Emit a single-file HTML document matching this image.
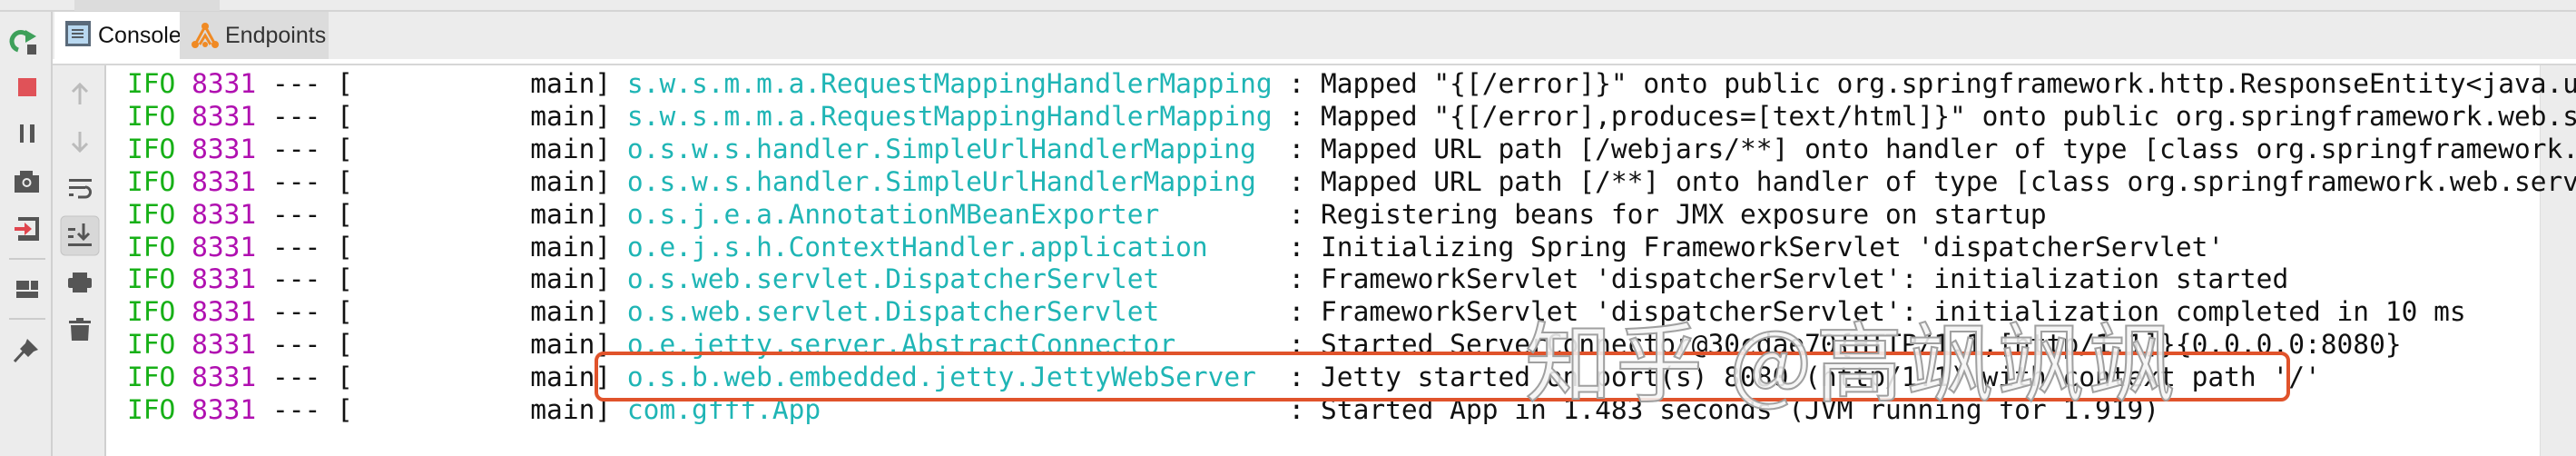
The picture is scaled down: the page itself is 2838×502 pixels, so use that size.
<!DOCTYPE html>
<html><head><meta charset="utf-8"><style>
*{margin:0;padding:0;box-sizing:border-box}
body{width:2838px;height:502px;overflow:hidden;background:#fff;position:relative;font-family:"Liberation Sans",sans-serif}
.top{position:absolute;left:0;top:0;width:2838px;height:13px;background:#ececec;border-bottom:2px solid #d4d4d4}
.apptab{position:absolute;left:82px;top:0;width:160px;height:12px;background:#dcdcdc}
.lt{position:absolute;left:0;top:13px;width:58px;height:489px;background:#ececec;border-right:2px solid #d0d0d0}
.tabs{position:absolute;left:58px;top:13px;width:2780px;height:52px;background:#ececec}
.tabline{position:absolute;left:58px;top:65px;width:2780px;height:7px;background:#fff;border-bottom:2px solid #d6d6d6}
.t1{position:absolute;left:60px;top:13px;width:138px;height:54px;background:#fff;font-size:25px;color:#111}
.t2{position:absolute;left:198px;top:13px;width:164px;height:52px;background:#dcdcdc;font-size:25px;color:#333}
.lt2{position:absolute;left:58px;top:72px;width:59px;height:430px;background:#ececec;border-right:2px solid #d0d0d0}
.sb{position:absolute;left:2798px;top:72px;width:40px;height:430px;background:#ececec;border-left:1px solid #ddd}
pre{position:absolute;left:140px;top:75px;font-family:"DejaVu Sans Mono","Liberation Mono",monospace;font-size:29.52px;line-height:35.9px;color:#111;white-space:pre}
.g{color:#17b017}.m{color:#b010b0}.c{color:#1fb5b5}
.box{position:absolute;left:655px;top:387px;width:1868px;height:55px;border:4px solid #e0532b;border-radius:10px}
.wm{position:absolute;left:1680px;top:338px;font-family:"Noto Sans CJK SC",sans-serif;font-size:96px;line-height:110px;color:rgba(245,245,245,0.88);-webkit-text-stroke:2px #a0a0a0;letter-spacing:4px;white-space:nowrap}
</style></head><body>
<div class="top"><div class="apptab"></div></div>
<div class="tabs"></div>
<div class="t1"><svg style="position:absolute;left:12px;top:10px" width="28" height="28"><rect x="0" y="0" width="28" height="28" fill="#5a6a7a"/><rect x="3" y="5" width="22" height="20" fill="#b8d8f0"/><g stroke="#333" stroke-width="1.5"><line x1="7" y1="10" x2="20" y2="10"/><line x1="7" y1="14" x2="20" y2="14"/><line x1="7" y1="18" x2="20" y2="18"/></g></svg><span style="position:absolute;left:48px;top:12px">Console</span></div>
<div class="t2"><svg style="position:absolute;left:12px;top:10px" width="32" height="32"><g stroke="#f08a24" stroke-width="3" fill="none"><path d="M5 26 L16 6 L27 26 M10 26 L16 16 L22 26"/></g><circle cx="16" cy="6" r="4" fill="#f08a24"/><circle cx="5" cy="26" r="4" fill="#f08a24"/><circle cx="27" cy="26" r="4" fill="#f08a24"/><circle cx="16" cy="26" r="3" fill="#f08a24"/></svg><span style="position:absolute;left:50px;top:12px">Endpoints</span></div>
<div class="tabline"></div>
<div class="lt">
<svg width="58" height="489" style="position:absolute;left:0;top:0">
<path d="M20 42 A10 10 0 1 1 32 28" stroke="#3ea05a" stroke-width="5" fill="none"/><path d="M28 20 L40 27 L28 34Z" fill="#3ea05a"/><rect x="30" y="36" width="10" height="11" fill="#555"/>
<rect x="20" y="73" width="20" height="20" fill="#e05258"/>
<rect x="22" y="124" width="4" height="20" fill="#555"/><rect x="33" y="124" width="5" height="20" fill="#555"/>
<rect x="16" y="180" width="27" height="19" fill="#555"/><rect x="22" y="175" width="14" height="6" fill="#555"/><circle cx="29.5" cy="188" r="5" fill="#ececec"/><circle cx="29.5" cy="188" r="3" fill="#555"/>
<path d="M20 226 H43 V252 H20 V246 H39 V230 H20Z" fill="#555"/><path d="M16 237 H27 V232 L35 239 L27 246 V241 H16Z" fill="#e0454e"/>
<line x1="10" y1="272" x2="50" y2="272" stroke="#ccc" stroke-width="2"/>
<rect x="18" y="296" width="14" height="10" fill="#555"/><rect x="34" y="296" width="8" height="10" fill="#555"/><rect x="18" y="308" width="24" height="7" fill="#555"/>
<line x1="10" y1="338" x2="50" y2="338" stroke="#ccc" stroke-width="2"/>
<path d="M16 385 L27 373" stroke="#555" stroke-width="3"/><path d="M30 360 L42 372 L37 374 L31 380 L22 371 L28 365Z" fill="#555"/>
</svg></div>
<div class="lt2"><svg width="59" height="430" style="position:absolute;left:0;top:0">
<g stroke="#bbb" stroke-width="3" fill="none"><path d="M30 43 V21 M22 29 L30 21 L38 29"/><path d="M30 73 V94 M22 86 L30 94 L38 86"/></g>
<g fill="#555"><rect x="18" y="125" width="25" height="3"/><rect x="18" y="133" width="18" height="3"/><rect x="18" y="141" width="5" height="3"/></g><path d="M36 134 A5 5 0 0 1 36 145 H28" stroke="#555" stroke-width="3" fill="none"/>
<rect x="9" y="166" width="42" height="43" rx="5" fill="#d8d8d8" stroke="#c4c4c4"/>
<g fill="#555"><rect x="17" y="179" width="8" height="3"/><rect x="17" y="187" width="6" height="3"/><rect x="17" y="196" width="26" height="3"/></g><path d="M34 174 V190 M28 185 L34 191 L40 185" stroke="#555" stroke-width="3" fill="none"/>
<rect x="22" y="228" width="16" height="6" fill="#555"/><rect x="17" y="234" width="26" height="11" rx="2" fill="#555"/><rect x="22" y="243" width="16" height="7" fill="#555"/>
<rect x="18" y="281" width="24" height="3" fill="#555"/><rect x="26" y="278" width="8" height="4" fill="#555"/><path d="M20 286 H40 L39 303 H21Z" fill="#555"/>
</svg></div>
<div class="sb"></div>
<pre><span class="g">IFO</span> <span class="m">8331</span> --- [           main] <span class="c">s.w.s.m.m.a.RequestMappingHandlerMapping</span> : Mapped "{[/error]}" onto public org.springframework.http.ResponseEntity&lt;java.util.Map
<span class="g">IFO</span> <span class="m">8331</span> --- [           main] <span class="c">s.w.s.m.m.a.RequestMappingHandlerMapping</span> : Mapped "{[/error],produces=[text/html]}" onto public org.springframework.web.servlet
<span class="g">IFO</span> <span class="m">8331</span> --- [           main] <span class="c">o.s.w.s.handler.SimpleUrlHandlerMapping</span>  : Mapped URL path [/webjars/**] onto handler of type [class org.springframework.web
<span class="g">IFO</span> <span class="m">8331</span> --- [           main] <span class="c">o.s.w.s.handler.SimpleUrlHandlerMapping</span>  : Mapped URL path [/**] onto handler of type [class org.springframework.web.servlet
<span class="g">IFO</span> <span class="m">8331</span> --- [           main] <span class="c">o.s.j.e.a.AnnotationMBeanExporter</span>        : Registering beans for JMX exposure on startup
<span class="g">IFO</span> <span class="m">8331</span> --- [           main] <span class="c">o.e.j.s.h.ContextHandler.application</span>     : Initializing Spring FrameworkServlet 'dispatcherServlet'
<span class="g">IFO</span> <span class="m">8331</span> --- [           main] <span class="c">o.s.web.servlet.DispatcherServlet</span>        : FrameworkServlet 'dispatcherServlet': initialization started
<span class="g">IFO</span> <span class="m">8331</span> --- [           main] <span class="c">o.s.web.servlet.DispatcherServlet</span>        : FrameworkServlet 'dispatcherServlet': initialization completed in 10 ms
<span class="g">IFO</span> <span class="m">8331</span> --- [           main] <span class="c">o.e.jetty.server.AbstractConnector</span>       : Started ServerConnector@30cdae70{HTTP/1.1,[http/1.1]}{0.0.0.0:8080}
<span class="g">IFO</span> <span class="m">8331</span> --- [           main] <span class="c">o.s.b.web.embedded.jetty.JettyWebServer</span>  : Jetty started on port(s) 8080 (http/1.1) with context path '/'
<span class="g">IFO</span> <span class="m">8331</span> --- [           main] <span class="c">com.gfff.App</span>                             : Started App in 1.483 seconds (JVM running for 1.919)</pre>
<div class="box"></div>
<div class="wm">知乎 @高飒飒飒</div>
</body></html>
